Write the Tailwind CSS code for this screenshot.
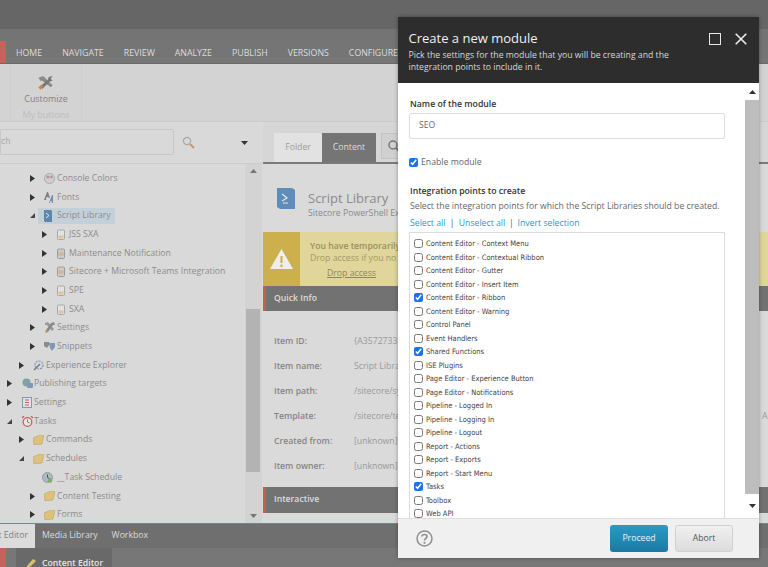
<!DOCTYPE html>
<html><head><meta charset="utf-8">
<script src="https://cdn.jsdelivr.net/npm/@tailwindcss/browser@4"></script>
</head>
<body class="m-0">
<div class="relative w-[768px] h-[567px] overflow-hidden flex flex-col bg-[#d6d6d6] font-['Open_Sans',sans-serif] text-[#8c8c8c]">

  <div class="h-[29px] shrink-0 bg-[#666666]"></div>
  <div class="h-[35px] shrink-0 bg-gradient-to-b from-[#737373] to-[#767676] border-b border-[#6a6a6a] flex items-end">
    <div class="w-[6px] h-[22px] bg-[#c9605c]"></div>
    <div class="flex gap-[20px] pl-[10px] pt-[4px] h-[22px] items-center text-[8.8px] text-[#dcdcdc]">
      <span>HOME</span><span>NAVIGATE</span><span>REVIEW</span><span>ANALYZE</span><span>PUBLISH</span><span>VERSIONS</span><span>CONFIGURE</span>
    </div>
  </div>
  <div class="h-[58px] shrink-0 bg-[#d3d3d3] flex border-b border-[#cbcbcb]">
    <div class="ml-[10px] w-[72px] border-x border-[#cdcdcd] flex flex-col items-center pt-[11px]">
      <svg class="w-[18px] h-[17px]" viewBox="0 0 18 17"><path d="M1 3 L6 1 L16 11 L14 13 L5 6 L3 6 Z" fill="#8a8a8a"/><path d="M16 1 L12 2 L11 5 L3 12 L5 15 L13 7 L16 6 L14 4 Z" fill="#777"/><path d="M1 13 L4 10 L6 12 L3 16 Z" fill="#c98a45"/></svg>
      <span class="text-[8.9px] leading-[13px] mt-[1px] text-[#7f7f7f]">Customize</span>
      <span class="text-[8.9px] leading-[13px] mt-[3px] text-[#bdbdbd]">My buttons</span>
    </div>
  </div>

  <div class="flex-1 flex min-h-0">
    <div class="w-[262px] shrink-0 flex flex-col bg-[#d9d9d9]">
      <div class="h-[42px] shrink-0 border-b border-[#cccccc] flex items-center">
        <div class="w-[174px] h-[26px] mt-[-2px] border border-[#c8c8c8] rounded-r-[2px] flex items-center text-[8.7px] text-[#a8a8a8] overflow-hidden">
          <span>ch</span>
        </div>
        <svg class="w-[13px] h-[13px] ml-[8px]" viewBox="0 0 13 13"><circle cx="5" cy="5" r="3.6" fill="none" stroke="#a9a9a9" stroke-width="1.2"/><path d="M8 8 L12 12" stroke="#c69a5a" stroke-width="2"/></svg>
        <svg class="w-[7px] h-[4px] ml-[46px]" viewBox="0 0 7 4"><path d="M0 0H7L3.500 4Z" fill="#333"/></svg>
      </div>
      <div class="flex-1 flex min-h-0">
        <div class="w-[245px] pt-[5px] text-[8.7px] overflow-hidden whitespace-nowrap">
          <div class="h-[18.7px] flex items-center pl-[30px]"><svg class="w-[5px] h-[7px] mr-[9px]" viewBox="0 0 5 7"><path d="M0 0L5 3.500L0 7Z" fill="#333"/></svg><svg class="w-[11px] h-[11px] mr-[2px]" viewBox="0 0 11 11"><circle cx="5.500" cy="5.500" r="5" fill="#cfcfcf" stroke="#a8a8a8"/><circle cx="4" cy="4" r="1.500" fill="#c98a80"/><circle cx="7.500" cy="4" r="1.300" fill="#8aa0b8"/></svg>Console Colors</div>
          <div class="h-[18.7px] flex items-center pl-[30px]"><svg class="w-[5px] h-[7px] mr-[9px]" viewBox="0 0 5 7"><path d="M0 0L5 3.500L0 7Z" fill="#333"/></svg><svg class="w-[11px] h-[11px] mr-[2px]" viewBox="0 0 11 11"><path d="M0 8L3 0H4L6 6H4.800L4.300 5H2.500L2 8Z" fill="#808080"/><path d="M5 11L8 3H9V11H7.800V9H6.500L6 11Z" fill="#6f8fb5"/></svg>Fonts</div>
          <div class="h-[18.7px] flex items-center pl-[30px]"><svg class="w-[5px] h-[5px] mr-[3px]" viewBox="0 0 5 5"><path d="M5 0V5H0Z" fill="#444"/></svg><div class="h-[16px] w-[77px] bg-[#c3d0d9] flex items-center pl-[6px]"><svg class="w-[8px] h-[12px] mr-[5px]" viewBox="0 0 8 12"><path d="M0 0H7L8 1V12H1L0 11Z" fill="#5d86ad"/><path d="M2 3L5 5.500L2 8" fill="none" stroke="#dfe7ee"/></svg>Script Library</div></div>
          <div class="h-[18.7px] flex items-center pl-[42px]"><svg class="w-[5px] h-[7px] mr-[10px]" viewBox="0 0 5 7"><path d="M0 0L5 3.500L0 7Z" fill="#333"/></svg><svg class="w-[8px] h-[11px] mr-[4px]" viewBox="0 0 8 11"><rect x=".5" y="1" width="7" height="9.500" rx="1" fill="#e2e2e2" stroke="#a8a8a8"/><rect x="1.500" y="6.500" width="5" height="3" fill="#dcc59c"/></svg>JSS SXA</div>
          <div class="h-[18.7px] flex items-center pl-[42px]"><svg class="w-[5px] h-[7px] mr-[10px]" viewBox="0 0 5 7"><path d="M0 0L5 3.500L0 7Z" fill="#333"/></svg><svg class="w-[8px] h-[11px] mr-[4px]" viewBox="0 0 8 11"><rect x=".5" y="1" width="7" height="9.500" rx="1" fill="#cbcbcb" stroke="#9c9c9c"/><rect x="1.500" y="4" width="5" height="4" fill="#d0b79e"/></svg>Maintenance Notification</div>
          <div class="h-[18.7px] flex items-center pl-[42px]"><svg class="w-[5px] h-[7px] mr-[10px]" viewBox="0 0 5 7"><path d="M0 0L5 3.500L0 7Z" fill="#333"/></svg><svg class="w-[8px] h-[11px] mr-[4px]" viewBox="0 0 8 11"><rect x=".5" y="1" width="7" height="9.500" rx="1" fill="#cbcbcb" stroke="#9c9c9c"/><rect x="1.500" y="4" width="5" height="4" fill="#d0b79e"/></svg>Sitecore + Microsoft Teams Integration</div>
          <div class="h-[18.7px] flex items-center pl-[42px]"><svg class="w-[5px] h-[7px] mr-[10px]" viewBox="0 0 5 7"><path d="M0 0L5 3.500L0 7Z" fill="#333"/></svg><svg class="w-[8px] h-[11px] mr-[4px]" viewBox="0 0 8 11"><rect x=".5" y="1" width="7" height="9.500" rx="1" fill="#e2e2e2" stroke="#a8a8a8"/><rect x="1.500" y="6.500" width="5" height="3" fill="#dcc59c"/></svg>SPE</div>
          <div class="h-[18.7px] flex items-center pl-[42px]"><svg class="w-[5px] h-[7px] mr-[10px]" viewBox="0 0 5 7"><path d="M0 0L5 3.500L0 7Z" fill="#333"/></svg><svg class="w-[8px] h-[11px] mr-[4px]" viewBox="0 0 8 11"><rect x=".5" y="1" width="7" height="9.500" rx="1" fill="#e2e2e2" stroke="#a8a8a8"/><rect x="1.500" y="6.500" width="5" height="3" fill="#dcc59c"/></svg>SXA</div>
          <div class="h-[18.7px] flex items-center pl-[30px]"><svg class="w-[5px] h-[7px] mr-[9px]" viewBox="0 0 5 7"><path d="M0 0L5 3.500L0 7Z" fill="#333"/></svg><svg class="w-[11px] h-[11px] mr-[2px]" viewBox="0 0 11 11"><path d="M1 1L4 0L10 7L8 9L3 3L1 3Z" fill="#9a9a9a"/><path d="M10 0L7 1L2 8L4 10L9 3L11 3Z" fill="#8a8a8a"/><path d="M1 9L3 8L4 10L2 11Z" fill="#c98a45"/></svg>Settings</div>
          <div class="h-[18.7px] flex items-center pl-[30px]"><svg class="w-[5px] h-[7px] mr-[9px]" viewBox="0 0 5 7"><path d="M0 0L5 3.500L0 7Z" fill="#333"/></svg><svg class="w-[11px] h-[11px] mr-[2px]" viewBox="0 0 11 11"><path d="M0 1H5L6 3L3 7L0 5Z" fill="#8c8c8c"/><path d="M5 2H11V6L8 10L6 7Z" fill="#7f98b3"/></svg>Snippets</div>
          <div class="h-[18.7px] flex items-center pl-[19px]"><svg class="w-[5px] h-[7px] mr-[9px]" viewBox="0 0 5 7"><path d="M0 0L5 3.500L0 7Z" fill="#333"/></svg><svg class="w-[11px] h-[11px] mr-[2px]" viewBox="0 0 11 11"><circle cx="6" cy="5" r="4" fill="none" stroke="#7f98b3" stroke-width="1.200" stroke-dasharray="2 1"/><path d="M1 10L7 4" stroke="#777" stroke-width="1.500"/></svg>Experience Explorer</div>
          <div class="h-[18.7px] flex items-center pl-[7px]"><svg class="w-[5px] h-[7px] mr-[10px]" viewBox="0 0 5 7"><path d="M0 0L5 3.500L0 7Z" fill="#333"/></svg><svg class="w-[11px] h-[11px] mr-[1px]" viewBox="0 0 11 11"><circle cx="4.500" cy="4.500" r="4" fill="#7fa3a3"/><rect x="5" y="5" width="6" height="5" rx="1" fill="#8097b5"/></svg>Publishing targets</div>
          <div class="h-[18.7px] flex items-center pl-[7px]"><svg class="w-[5px] h-[7px] mr-[10px]" viewBox="0 0 5 7"><path d="M0 0L5 3.500L0 7Z" fill="#333"/></svg><svg class="w-[10px] h-[11px] mr-[2px]" viewBox="0 0 10 11"><rect x=".5" y=".5" width="9" height="10" fill="#dfe3e8" stroke="#7f98b3"/><path d="M3 3H7M3 5.500H7M3 8H7" stroke="#c25f55"/></svg>Settings</div>
          <div class="h-[18.7px] flex items-center pl-[7px]"><svg class="w-[5px] h-[5px] mr-[10px]" viewBox="0 0 5 5"><path d="M5 0V5H0Z" fill="#444"/></svg><svg class="w-[11px] h-[11px] mr-[1px]" viewBox="0 0 11 11"><circle cx="5.500" cy="6" r="4.300" fill="#e6e6e6" stroke="#c4635a" stroke-width="1.300"/><path d="M5.500 3.500V6L7.500 7" stroke="#777" fill="none"/><path d="M0 2L2 0M11 2L9 0" stroke="#c4635a" stroke-width="1.300"/></svg>Tasks</div>
          <div class="h-[18.7px] flex items-center pl-[19px]"><svg class="w-[5px] h-[7px] mr-[9px]" viewBox="0 0 5 7"><path d="M0 0L5 3.500L0 7Z" fill="#333"/></svg><svg class="w-[11px] h-[10px] mr-[2px]" viewBox="0 0 11 10"><path d="M0 3L7 0H11L9 9L1 10Z" fill="#dcc27a" stroke="#b89c50" stroke-width=".5"/></svg>Commands</div>
          <div class="h-[18.7px] flex items-center pl-[19px]"><svg class="w-[5px] h-[5px] mr-[9px]" viewBox="0 0 5 5"><path d="M5 0V5H0Z" fill="#444"/></svg><svg class="w-[11px] h-[10px] mr-[2px]" viewBox="0 0 11 10"><path d="M0 3L7 0H11L9 9L1 10Z" fill="#dcc27a" stroke="#b89c50" stroke-width=".5"/></svg>Schedules</div>
          <div class="h-[18.7px] flex items-center pl-[42px]"><svg class="w-[11px] h-[11px] mr-[4px]" viewBox="0 0 11 11"><circle cx="5.500" cy="5.500" r="5" fill="#a9bac4" stroke="#8a8a8a" stroke-width=".7"/><path d="M5.500 2.500V5.500L8 7" stroke="#555" fill="none"/><circle cx="8" cy="8.500" r="2.300" fill="#7fae6a"/></svg>__Task Schedule</div>
          <div class="h-[18.7px] flex items-center pl-[30px]"><svg class="w-[5px] h-[7px] mr-[9px]" viewBox="0 0 5 7"><path d="M0 0L5 3.500L0 7Z" fill="#333"/></svg><svg class="w-[11px] h-[10px] mr-[2px]" viewBox="0 0 11 10"><path d="M0 3L7 0H11L9 9L1 10Z" fill="#dcc27a" stroke="#b89c50" stroke-width=".5"/></svg>Content Testing</div>
          <div class="h-[18.7px] flex items-center pl-[30px]"><svg class="w-[5px] h-[7px] mr-[9px]" viewBox="0 0 5 7"><path d="M0 0L5 3.500L0 7Z" fill="#333"/></svg><svg class="w-[11px] h-[10px] mr-[2px]" viewBox="0 0 11 10"><path d="M0 3L7 0H11L9 9L1 10Z" fill="#dcc27a" stroke="#b89c50" stroke-width=".5"/></svg>Forms</div>
        </div>
        <div class="w-[17px] shrink-0 bg-[#d3d3d3] flex flex-col items-center justify-between py-[5px] relative">
          <svg class="w-[7px] h-[4px]" viewBox="0 0 7 4"><path d="M0 4H7L3.500 0Z" fill="#777"/></svg>
          <div class="absolute top-[145px] left-[1px] w-[14px] h-[163px] bg-[#b3b3b3]"></div>
          <svg class="w-[7px] h-[4px]" viewBox="0 0 7 4"><path d="M0 0H7L3.500 4Z" fill="#777"/></svg>
        </div>
      </div>
    </div>

    <div class="flex-1 bg-[#dadada] flex flex-col pl-[1px] text-[8.7px] min-w-0 overflow-hidden">
      <div class="h-[42px] shrink-0 bg-[#d6d6d6] flex items-end pl-[11px] border-b-2 border-[#7a7a7a]">
        <div class="h-[29px] w-[48px] bg-[#e2e2e2] flex items-center justify-center text-[#9c9c9c]">Folder</div>
        <div class="h-[29px] w-[54px] bg-[#757575] flex items-center justify-center text-[#dcdcdc]">Content</div>
        <div class="h-[26px] w-[30px] ml-[5px] mb-[3px] bg-[#d0d0d0] border border-[#c4c4c4] pl-[6px] pt-[6px]"><svg class="w-[12px] h-[12px]" viewBox="0 0 12 12"><circle cx="5" cy="5" r="4" fill="none" stroke="#777" stroke-width="1.500"/><path d="M8 8L11 11" stroke="#777" stroke-width="2"/></svg></div>
      </div>
      <div class="h-[68px] shrink-0 flex items-center pl-[14px]">
        <svg class="w-[18px] h-[22px] mr-[13px]" viewBox="0 0 18 22"><path d="M0 1H15L18 3V22H3L0 20Z" fill="#5f8cb8"/><path d="M5 7L10 11L5 14M6 16H11" fill="none" stroke="#e2e8ee" stroke-width="1.200"/></svg>
        <div class="whitespace-nowrap mt-[14px]"><div class="text-[13px] leading-[17px] text-[#8a8a8a]">Script Library</div><div class="text-[8.7px] leading-[13px] text-[#8a8a8a]">Sitecore PowerShell Extensions</div></div>
      </div>
      <div class="h-[54px] shrink-0 flex bg-[#e0d59b]">
        <div class="w-[37px] bg-[#cbb04c] flex items-center justify-center"><svg class="w-[23px] h-[20px]" viewBox="0 0 23 20"><path d="M11.500 0L23 20H0Z" fill="#eeeeee"/><path d="M11.500 7V14M11.500 15.500V18" stroke="#c9ad48" stroke-width="2"/></svg></div>
        <div class="pl-[10px] pt-[8px] text-[#a39a68] leading-[12px] whitespace-nowrap"><div class="font-semibold text-[#98905f]">You have temporarily</div><div>Drop access if you no</div><div class="underline mt-[3px] pl-[17px] text-[#8f8758]">Drop access</div></div>
      </div>
      <div class="h-[25px] shrink-0 bg-[#727272] border-l-[3px] border-[#c45c58] flex items-center pl-[8px] font-semibold text-[#dddddd]">Quick Info</div>
      <div class="flex-1 flex flex-col pt-[18px] pl-[11px] whitespace-nowrap">
        <div class="h-[25px] flex items-center"><span class="w-[80px] shrink-0 font-semibold text-[#858585]">Item ID:</span><span class="text-[#999999]">{A3572733-</span></div>
        <div class="h-[25px] flex items-center"><span class="w-[80px] shrink-0 font-semibold text-[#858585]">Item name:</span><span class="text-[#999999]">Script Library</span></div>
        <div class="h-[25px] flex items-center"><span class="w-[80px] shrink-0 font-semibold text-[#858585]">Item path:</span><span class="text-[#999999]">/sitecore/sy</span></div>
        <div class="h-[25px] flex items-center"><span class="w-[80px] shrink-0 font-semibold text-[#858585]">Template:</span><span class="w-[408px] shrink-0 text-[#999999]">/sitecore/te</span><span class="text-[#999999]">Ac</span></div>
        <div class="h-[25px] flex items-center"><span class="w-[80px] shrink-0 font-semibold text-[#858585]">Created from:</span><span class="text-[#999999]">[unknown]</span></div>
        <div class="h-[25px] flex items-center"><span class="w-[80px] shrink-0 font-semibold text-[#858585]">Item owner:</span><span class="text-[#999999]">[unknown]</span></div>
      </div>
      <div class="h-[26px] shrink-0 bg-[#727272] border-l-[3px] border-[#c45c58] flex items-center pl-[8px] font-semibold text-[#dddddd]">Interactive</div>
      <div class="h-[10px] shrink-0"></div>
    </div>
  </div>

  <div class="h-[25px] shrink-0 bg-[#6f6f6f] border-t border-[#c9625e] flex text-[8.7px] text-[#dcdcdc]">
    <div class="w-[35px] bg-[#dcdcdc] text-[#808080] flex items-center justify-end pr-[7px] whitespace-nowrap overflow-hidden">Content Editor</div>
    <div class="flex items-center pl-[7px] gap-[14px]"><span>Media Library</span><span>Workbox</span></div>
  </div>
  <div class="h-[19px] shrink-0 bg-[#777777] flex overflow-hidden">
    <div class="w-[6px] bg-[#c9605c]"></div>
    <div class="ml-[10px] w-[96px] h-[32px] bg-[#696969] flex items-center pl-[9px] text-[8.7px] font-semibold text-[#e4e4e4]">
      <svg class="w-[11px] h-[11px] mr-[6px]" viewBox="0 0 11 11"><path d="M0 11L2 7L8 0L11 2L4 9Z" fill="#d8c169"/></svg>Content Editor
    </div>
  </div>

  <div class="absolute left-[398px] top-[17px] w-[361px] h-[541px] bg-white flex flex-col shadow-[0_0_4px_rgba(0,0,0,0.35)]">
    <div class="h-[66px] shrink-0 bg-[#2d2d2d] relative pl-[10.5px] pt-[12px] text-white">
      <div class="text-[13px] leading-[19px] text-[#f0f0f0]">Create a new module</div>
      <div class="text-[8.7px] leading-[12px] mt-[1px] text-[#d8d8d8] w-[290px]">Pick the settings for the module that you will be creating and the integration points to include in it.</div>
      <div class="absolute top-[16px] right-[38px] w-[12px] h-[12px] border-[1.5px] border-[#e8e8e8]"></div>
      <svg class="absolute top-[16px] right-[12px] w-[12px] h-[12px]" viewBox="0 0 12 12"><path d="M0.700 0.700L11.300 11.300M11.300 0.700L0.700 11.300" stroke="#eeeeee" stroke-width="1.600"/></svg>
    </div>
    <div class="flex-1 flex min-h-0">
      <div class="w-[347px] overflow-hidden pl-[11px] pr-[20px] pt-[15px] text-[8.7px] text-[#555555]">
        <div class="ml-[1px] font-semibold text-[#333333] leading-[13px]">Name of the module</div>
        <div class="mt-[2px] h-[26px] border border-[#dcdcdc] rounded-[2px] flex items-center pl-[9px] text-[#6a6a6a]">SEO</div>
        <label class="mt-[17px] flex items-center h-[13px] text-[#666666]"><input type="checkbox" checked class="w-[9px] h-[9px] mr-[3px] accent-[#1a73e8]">Enable module</label>
        <div class="ml-[1px] mt-[16px] font-semibold text-[#333333] leading-[13px]">Integration points to create</div>
        <div class="ml-[1px] mt-[1px] leading-[14px] whitespace-nowrap text-[#666666]">Select the integration points for which the Script Libraries should be created.</div>
        <div class="ml-[1px] mt-[3px] leading-[14px] text-[#2b9ac4]">Select all <span class="text-[#555555] px-[2px]">|</span> Unselect all <span class="text-[#555555] px-[1.5px]">|</span> Invert selection</div>
        <div class="mt-[2px] h-[300px] border border-[#dcdcdc] pl-[4px] pt-[4px] font-['DejaVu_Sans_Condensed','DejaVu_Sans',sans-serif] text-[7.5px] text-[#444444]">
          <label class="h-[13.500px] flex items-center"><input type="checkbox" class="w-[9px] h-[9px] mr-[3px] accent-[#1a73e8]">Content Editor - Context Menu</label>
          <label class="h-[13.500px] flex items-center"><input type="checkbox" class="w-[9px] h-[9px] mr-[3px] accent-[#1a73e8]">Content Editor - Contextual Ribbon</label>
          <label class="h-[13.500px] flex items-center"><input type="checkbox" class="w-[9px] h-[9px] mr-[3px] accent-[#1a73e8]">Content Editor - Gutter</label>
          <label class="h-[13.500px] flex items-center"><input type="checkbox" class="w-[9px] h-[9px] mr-[3px] accent-[#1a73e8]">Content Editor - Insert Item</label>
          <label class="h-[13.500px] flex items-center"><input type="checkbox" checked class="w-[9px] h-[9px] mr-[3px] accent-[#1a73e8]">Content Editor - Ribbon</label>
          <label class="h-[13.500px] flex items-center"><input type="checkbox" class="w-[9px] h-[9px] mr-[3px] accent-[#1a73e8]">Content Editor - Warning</label>
          <label class="h-[13.500px] flex items-center"><input type="checkbox" class="w-[9px] h-[9px] mr-[3px] accent-[#1a73e8]">Control Panel</label>
          <label class="h-[13.500px] flex items-center"><input type="checkbox" class="w-[9px] h-[9px] mr-[3px] accent-[#1a73e8]">Event Handlers</label>
          <label class="h-[13.500px] flex items-center"><input type="checkbox" checked class="w-[9px] h-[9px] mr-[3px] accent-[#1a73e8]">Shared Functions</label>
          <label class="h-[13.500px] flex items-center"><input type="checkbox" class="w-[9px] h-[9px] mr-[3px] accent-[#1a73e8]">ISE Plugins</label>
          <label class="h-[13.500px] flex items-center"><input type="checkbox" class="w-[9px] h-[9px] mr-[3px] accent-[#1a73e8]">Page Editor - Experience Button</label>
          <label class="h-[13.500px] flex items-center"><input type="checkbox" class="w-[9px] h-[9px] mr-[3px] accent-[#1a73e8]">Page Editor - Notifications</label>
          <label class="h-[13.500px] flex items-center"><input type="checkbox" class="w-[9px] h-[9px] mr-[3px] accent-[#1a73e8]">Pipeline - Logged In</label>
          <label class="h-[13.500px] flex items-center"><input type="checkbox" class="w-[9px] h-[9px] mr-[3px] accent-[#1a73e8]">Pipeline - Logging In</label>
          <label class="h-[13.500px] flex items-center"><input type="checkbox" class="w-[9px] h-[9px] mr-[3px] accent-[#1a73e8]">Pipeline - Logout</label>
          <label class="h-[13.500px] flex items-center"><input type="checkbox" class="w-[9px] h-[9px] mr-[3px] accent-[#1a73e8]">Report - Actions</label>
          <label class="h-[13.500px] flex items-center"><input type="checkbox" class="w-[9px] h-[9px] mr-[3px] accent-[#1a73e8]">Report - Exports</label>
          <label class="h-[13.500px] flex items-center"><input type="checkbox" class="w-[9px] h-[9px] mr-[3px] accent-[#1a73e8]">Report - Start Menu</label>
          <label class="h-[13.500px] flex items-center"><input type="checkbox" checked class="w-[9px] h-[9px] mr-[3px] accent-[#1a73e8]">Tasks</label>
          <label class="h-[13.500px] flex items-center"><input type="checkbox" class="w-[9px] h-[9px] mr-[3px] accent-[#1a73e8]">Toolbox</label>
          <label class="h-[13.500px] flex items-center"><input type="checkbox" class="w-[9px] h-[9px] mr-[3px] accent-[#1a73e8]">Web API</label>
        </div>
      </div>
      <div class="w-[14px] shrink-0 flex flex-col">
        <div class="h-[17px] flex items-center justify-center"><svg class="w-[7px] h-[4px]" viewBox="0 0 7 4"><path d="M0 4H7L3.500 0Z" fill="#333"/></svg></div>
        <div class="flex-1 bg-[#bdbdbd]"></div>
        <div class="h-[24px] flex items-center justify-center"><svg class="w-[7px] h-[4px]" viewBox="0 0 7 4"><path d="M0 0H7L3.500 4Z" fill="#333"/></svg></div>
      </div>
    </div>
    <div class="h-[40px] shrink-0 bg-[#f0f0f0] border-t border-[#dddddd] flex items-center pl-[18px] pr-[26px]">
      <svg class="w-[17px] h-[17px]" viewBox="0 0 17 17"><circle cx="8.500" cy="8.500" r="7.500" fill="none" stroke="#909090" stroke-width="1.500"/><path d="M6 6.500C6 3.800 11 3.800 11 6.500C11 8.500 8.500 8.300 8.500 10.500" fill="none" stroke="#909090" stroke-width="1.700"/><circle cx="8.500" cy="12.800" r="1.100" fill="#909090"/></svg>
      <div class="ml-auto w-[58px] h-[27px] rounded-[3px] bg-gradient-to-b from-[#2a9ac6] to-[#1a7aa3] flex items-center justify-center text-[8.7px] text-white/90">Proceed</div>
      <div class="ml-[7px] w-[58px] h-[27px] rounded-[3px] border border-[#d0d0d0] bg-gradient-to-b from-[#f0f0f0] to-[#dcdcdc] flex items-center justify-center text-[8.7px] text-[#555555]">Abort</div>
    </div>
  </div>
</div>
</body></html>
